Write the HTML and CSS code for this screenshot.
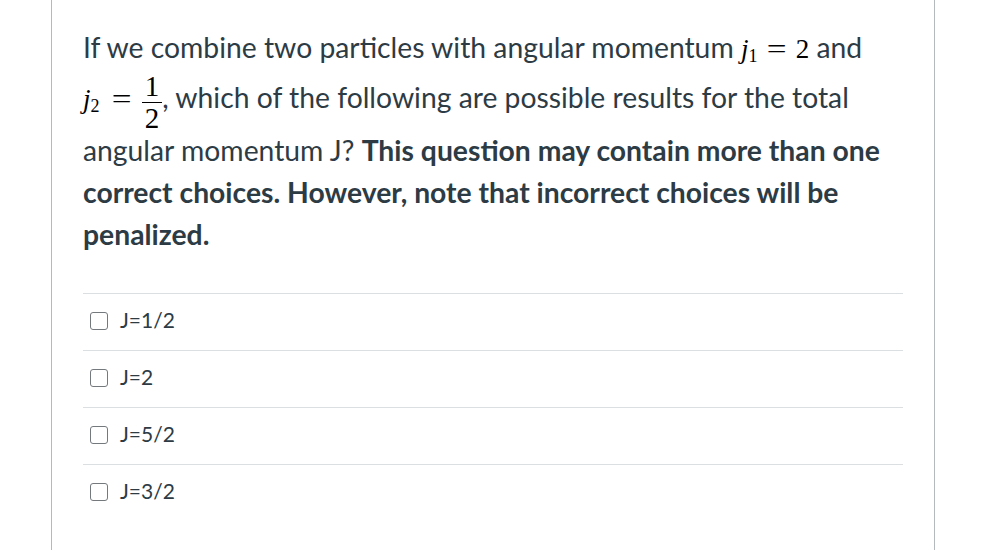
FILE: index.html
```html
<!DOCTYPE html>
<html>
<head>
<meta charset="utf-8">
<link rel="stylesheet" href="styles.css">
</head>
<body>
<div class="page">
  <div class="question">
    <p class="text">If we combine two particles with angular momentum <span class="math"><i class="mi">j</i><sub class="sub">1</sub><span class="op op1">=</span>2</span> and <span class="nw"><span class="math"><i class="mi">j</i><sub class="sub">2</sub><span class="op">=</span><span class="frac"><span class="num">1</span><span class="den">2</span></span></span>,</span> which of the following are possible results for the total angular momentum J? <b>This question may contain more than one correct choices. However, note that incorrect choices will be penalized.</b></p>
    <div class="answers">
      <label class="answer"><span class="box"></span><span class="label">J=1/2</span></label>
      <label class="answer"><span class="box"></span><span class="label">J=2</span></label>
      <label class="answer"><span class="box"></span><span class="label">J=5/2</span></label>
      <label class="answer"><span class="box"></span><span class="label">J=3/2</span></label>
    </div>
  </div>
</div>
</body>
</html>
```
FILE: styles.css
```css
html, body {
  margin: 0;
  padding: 0;
  background: #fff;
}
.page {
  margin-left: 51px;
  width: 882px;
  height: 550px;
  border-left: 1px solid #b4b9bd;
  border-right: 1px solid #b4b9bd;
  box-sizing: content-box;
}
.question {
  padding: 26px 31px 0 31px;
  color: #2d3b45;
  font-family: Lato, "Open Sans", sans-serif;
}
.text {
  margin: 0;
  font-size: 28.3px;
  line-height: 42px;
}
.text b {
  font-weight: 700;
}
.nw {
  white-space: nowrap;
}
.math {
  font-family: "Liberation Serif", "DejaVu Serif", serif;
  font-size: 27px;
  color: #000;
  white-space: nowrap;
}
.mi {
  font-style: italic;
}
.sub {
  font-size: 18px;
  vertical-align: -4px;
  line-height: 0;
}
.op {
  display: inline-block;
  margin: 0 13px 0 14px;
  transform: scaleX(1.3);
}
.op1 {
  margin: 0 11px 0 12px;
}
.frac {
  display: inline-block;
  text-align: center;
  vertical-align: -20px;
  padding-top: 5px;
  font-size: 29px;
}
.num {
  display: block;
  line-height: 22px;
  padding: 0 3px 5px;
  border-bottom: 1px solid #000;
}
.den {
  display: block;
  line-height: 22px;
  padding-top: 4px;
}
.answers {
  margin-top: 38px;
  display: flex;
  flex-direction: column;
}
.answer {
  display: flex;
  align-items: center;
  gap: 12px;
  height: 50px;
  padding-bottom: 6px;
  border-top: 1px solid #dcdfe1;
  padding-left: 7px;
  font-size: 21px;
}
.box {
  width: 16px;
  height: 16px;
  border: 1px solid #74797e;
  border-radius: 3px;
  box-sizing: content-box;
  margin-top: 4px;
}
.label {
  color: #2d3b45;
}
```
